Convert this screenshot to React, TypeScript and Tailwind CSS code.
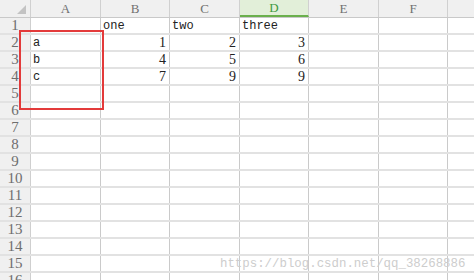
import React from 'react';

const cols = ['A', 'B', 'C', 'D', 'E', 'F', ''];
const widths = [70, 69, 70, 69, 70, 69, 70];

type Cell = { v: string; num?: boolean };

const data: Record<number, Cell[]> = {
  1: [{ v: '' }, { v: 'one' }, { v: 'two' }, { v: 'three' }],
  2: [{ v: 'a' }, { v: '1', num: true }, { v: '2', num: true }, { v: '3', num: true }],
  3: [{ v: 'b' }, { v: '4', num: true }, { v: '5', num: true }, { v: '6', num: true }],
  4: [{ v: 'c' }, { v: '7', num: true }, { v: '9', num: true }, { v: '9', num: true }],
};

const rows = Array.from({ length: 16 }, (_, i) => i + 1);

export default function App() {
  return (
    <div className="relative w-[474px] h-[280px] overflow-hidden bg-white select-none">
      {/* column header */}
      <div className="flex h-[18px] bg-[#f0f0f0] border-b border-[#c9c9c9]">
        <div className="relative w-[31px] shrink-0 border-r border-[#d0d0d0]">
          <svg className="absolute right-[4px] bottom-[3px]" width="9" height="9" viewBox="0 0 9 9">
            <polygon points="9,0 9,9 0,9" fill="#c3c3c3" />
          </svg>
        </div>
        {cols.map((c, i) => (
          <div
            key={i}
            style={{ width: widths[i] }}
            className={
              c === 'D'
                ? 'shrink-0 flex items-center justify-center border-r border-[#d0d0d0] bg-[#e2efd9] border-b-2 border-b-[#6ab04c] text-[#3f9a3f] text-[13px] leading-none font-["Liberation_Serif",serif]'
                : 'shrink-0 flex items-center justify-center border-r border-[#d0d0d0] text-[#707070] text-[13px] leading-none font-["Liberation_Serif",serif]'
            }
          >
            {c}
          </div>
        ))}
      </div>

      {rows.map((r) => (
        <div key={r} className="flex h-[17px] border-b-2 border-[#e2e2e2]">
          <div className="w-[31px] shrink-0 bg-[#f0f0f0] border-r border-[#cfcfcf] flex items-end justify-center text-[#6e6e6e] text-[15px] leading-[15px] font-['Liberation_Serif',serif]">
            {r}
          </div>
          {cols.map((c, i) => {
            const cell = data[r]?.[i];
            return (
              <div
                key={i}
                style={{ width: widths[i] }}
                className={
                  cell?.num
                    ? 'shrink-0 border-r border-[#cacaca] flex items-end justify-end pr-[3px] text-[#222] text-[14px] leading-[14px] font-["Liberation_Serif",serif]'
                    : 'shrink-0 border-r border-[#cacaca] flex items-end pl-[2px] text-[#222] text-[12px] leading-[14px] font-["Liberation_Mono",monospace]'
                }
              >
                {cell?.v}
              </div>
            );
          })}
        </div>
      ))}

      {/* selection highlight */}
      <div className="absolute left-[19px] top-[30px] w-[85px] h-[80px] border-2 border-[#e33a3a]" />

      {/* watermark */}
      <div className="absolute left-[220px] top-[257px] text-[12.4px] leading-[14px] text-[#cdcdcd] font-['Liberation_Mono',monospace]">
        https://blog.csdn.net/qq_38268886
      </div>
    </div>
  );
}
